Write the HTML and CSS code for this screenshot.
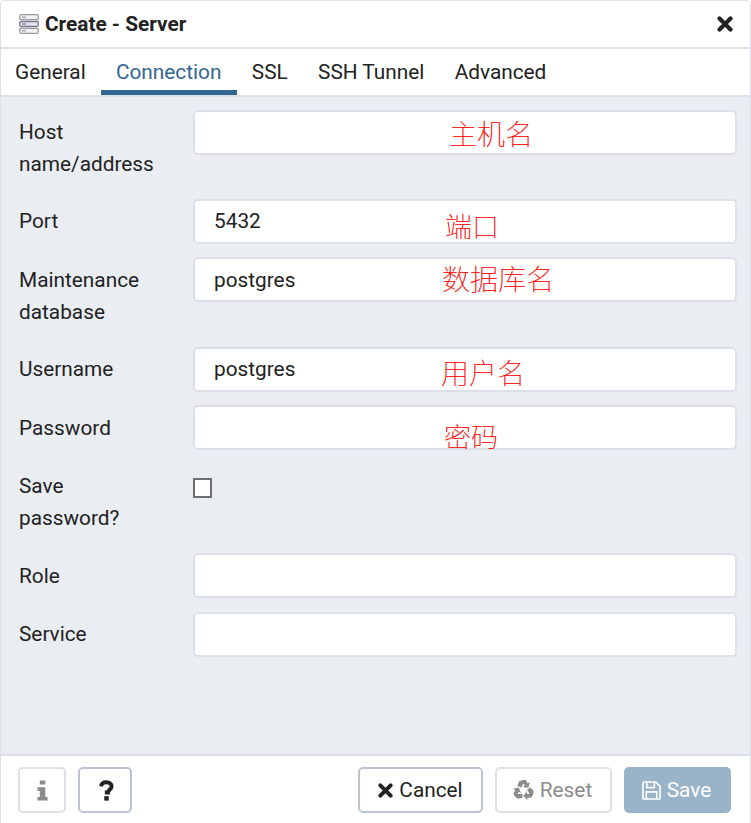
FILE: index.html
```html
<!DOCTYPE html>
<html lang="en">
<head>
    <meta charset="UTF-8">
    <meta name="viewport" content="width=device-width, initial-scale=1.0">
    <title>Create - Server</title>
    <link rel="stylesheet" href="styles.css">
</head>
<body>
    <div class="dialog">
        <div class="dialog-header">
            <svg class="server-icon" viewBox="0 0 20 20" width="20" height="20">
                <rect x="0.7" y="0.7" width="18.6" height="5" rx="1.5" fill="#f2f2f2" stroke="#9a9a9a" stroke-width="1.3"/>
                <rect x="0.7" y="7.5" width="18.6" height="5" rx="1.5" fill="#e4e4f2" stroke="#77778f" stroke-width="1.3"/>
                <rect x="0.7" y="14.3" width="18.6" height="5" rx="1.5" fill="#f2f2f2" stroke="#9a9a9a" stroke-width="1.3"/>
                <rect x="3" y="2.6" width="4" height="1.2" fill="#999"/>
                <rect x="3" y="9.4" width="4" height="1.2" fill="#777"/>
                <rect x="3" y="16.2" width="4" height="1.2" fill="#999"/>
            </svg>
            <span class="dialog-title">Create - Server</span>
            <svg class="close-icon" viewBox="0 0 16 16" width="16" height="16">
                <path d="M2.5 2.5L13.5 13.5M13.5 2.5L2.5 13.5" stroke="#222" stroke-width="4.2" stroke-linecap="round"/>
            </svg>
        </div>

        <div class="tabs">
            <a class="tab">General</a>
            <a class="tab active">Connection</a>
            <a class="tab">SSL</a>
            <a class="tab">SSH Tunnel</a>
            <a class="tab">Advanced</a>
        </div>

        <form class="form-body">
            <div class="form-row">
                <label class="form-label">Host name/address</label>
                <input class="form-input" type="text">
            </div>
            <div class="form-row">
                <label class="form-label">Port</label>
                <input class="form-input" type="text" value="5432">
            </div>
            <div class="form-row">
                <label class="form-label">Maintenance database</label>
                <input class="form-input" type="text" value="postgres">
            </div>
            <div class="form-row">
                <label class="form-label">Username</label>
                <input class="form-input" type="text" value="postgres">
            </div>
            <div class="form-row">
                <label class="form-label">Password</label>
                <input class="form-input" type="password">
            </div>
            <div class="form-row">
                <label class="form-label">Save password?</label>
                <span class="checkbox"></span>
            </div>
            <div class="form-row">
                <label class="form-label">Role</label>
                <input class="form-input" type="text">
            </div>
            <div class="form-row">
                <label class="form-label">Service</label>
                <input class="form-input" type="text">
            </div>
        </form>

        <div class="dialog-footer">
            <button type="button" class="btn btn-info" disabled>
                <svg viewBox="0 0 12 22" width="11" height="21">
                    <path d="M3 0H9V4.5H3ZM0.5 7.5H9V18H11.5V22H0.5V18H3V11.5H0.5Z" fill="#8c8c8c"/>
                </svg>
            </button>
            <button type="button" class="btn btn-help">
                <svg viewBox="0 0 16 22" width="15" height="21">
                    <path d="M2.2 6.6C2.6 3.6 4.8 2.2 7.8 2.2C11 2.2 13.4 3.9 13.4 6.6C13.4 9.8 9.6 10 9.6 13.2H6.2" fill="none" stroke="#222" stroke-width="4.2"/>
                    <rect x="5.6" y="17" width="4.8" height="4.8" fill="#222"/>
                </svg>
            </button>
            <span class="footer-space"></span>
            <button type="button" class="btn btn-cancel">
                <svg viewBox="0 0 16 16" width="15" height="15">
                    <path d="M2.5 2.5L13.5 13.5M13.5 2.5L2.5 13.5" stroke="#222" stroke-width="4.2" stroke-linecap="round"/>
                </svg>
                Cancel
            </button>
            <button type="button" class="btn btn-reset" disabled>
                <svg class="reset-icon" viewBox="0 0 24 24" width="21" height="21">
                    <g fill="#8c8c8c">
                        <path id="arrow" d="M7 2.5L11 1H14.5L17 5L19.5 3.5L17.5 10L11 9L13.5 7.5L12 5L9 10L5 7.5Z"/>
                        <use href="#arrow" transform="rotate(120 12 13)"/>
                        <use href="#arrow" transform="rotate(240 12 13)"/>
                    </g>
                </svg>
                Reset
            </button>
            <button type="button" class="btn btn-save" disabled>
                <svg viewBox="0 0 20 20" width="19" height="19">
                    <path d="M1 2.5C1 1.7 1.7 1 2.5 1H14.5L19 5.5V17.5C19 18.3 18.3 19 17.5 19H2.5C1.7 19 1 18.3 1 17.5Z" fill="none" stroke="#fff" stroke-width="1.7"/>
                    <path d="M5 1.5V7H13V1.5M4.5 18.5V11.5H15.5V18.5" fill="none" stroke="#fff" stroke-width="1.7"/>
                </svg>
                Save
            </button>
        </div>

        <span class="note note-host">主机名</span>
        <span class="note note-port">端口</span>
        <span class="note note-db">数据库名</span>
        <span class="note note-user">用户名</span>
        <span class="note note-pass">密码</span>
    </div>
</body>
</html>
```

FILE: styles.css
```css
* {
    box-sizing: border-box;
}
body {
    margin: 0;
    font-family: Roboto, Arial, sans-serif;
    font-size: 20.8px;
    color: #222;
    background-color: #fff;
}
.dialog {
    position: relative;
    display: flex;
    flex-direction: column;
    width: 751px;
    height: 823px;
    border: 1px solid #dde0e8;
    border-bottom: none;
    border-radius: 5px 5px 0 0;
    overflow: hidden;
}
.dialog-header {
    display: flex;
    align-items: center;
    height: 48px;
    padding: 0 17px 0 18px;
    border-bottom: 2px solid #dde0e8;
    flex-shrink: 0;
}
.server-icon {
    margin-right: 6px;
}
.dialog-title {
    font-weight: 700;
    flex: 1;
}
.tabs {
    display: flex;
    height: 48px;
    border-bottom: 2px solid #dde0e8;
    flex-shrink: 0;
}
.tab {
    height: 46px;
    padding: 9px 15.2px 0;
    line-height: 28px;
    color: #222;
}
.tab:first-child {
    padding-left: 14px;
    padding-right: 15px;
}
.tab.active {
    color: #326690;
    border-bottom: 5px solid #326690;
}
.form-body {
    flex: 1;
    display: flex;
    flex-direction: column;
    gap: 13.6px;
    padding: 12.7px 13px 0 18px;
    background-color: #eaedf2;
}
.form-row {
    display: flex;
    align-items: flex-start;
}
.form-label {
    width: 174px;
    padding: 7.6px 30px 4.4px 0;
    line-height: 31.8px;
    flex-shrink: 0;
}
.form-input {
    flex: 1;
    height: 45px;
    padding: 0 19px;
    border: 2px solid #dde0e8;
    border-radius: 5px;
    background-color: #fff;
    font-family: inherit;
    font-size: 20.8px;
    color: #222;
}
.checkbox {
    width: 19px;
    height: 20px;
    margin-top: 14px;
    border: 2px solid #6e6e6e;
    background-color: #fff;
}
.dialog-footer {
    display: flex;
    gap: 12px;
    height: 69px;
    padding: 11px 19px 10px 17px;
    border-top: 2px solid #dde0e8;
    flex-shrink: 0;
}
.footer-space {
    flex: 1;
}
.btn {
    display: flex;
    align-items: center;
    justify-content: center;
    gap: 6px;
    height: 46px;
    padding: 0;
    border: 2px solid #bcc3d2;
    border-radius: 5px;
    background-color: #fff;
    font-family: inherit;
    font-size: 20.8px;
    color: #222;
}
.btn-info {
    width: 48px;
    border-color: #dde0e8;
}
.btn-help {
    width: 54px;
    padding-left: 3px;
}
.btn-cancel {
    width: 125px;
}
.btn-reset {
    width: 117px;
    padding-right: 2px;
    border-color: #dde0e8;
    color: #8c8c8c;
}
.reset-icon {
    margin-bottom: 2px;
}
.btn-save {
    width: 107px;
    padding-right: 2px;
    border-color: #99b3c8;
    background-color: #99b3c8;
    color: #fff;
}
.note {
    position: absolute;
    font-family: "Noto Sans CJK SC", sans-serif;
    font-weight: 100;
    font-size: 28px;
    line-height: 28px;
    color: #f00;
    -webkit-text-stroke: 0.2px #f00;
    white-space: nowrap;
}
.note-host {
    left: 448px;
    top: 117.5px;
}
.note-port {
    left: 444px;
    top: 211px;
    font-size: 27px;
}
.note-db {
    left: 441px;
    top: 263px;
}
.note-user {
    left: 440px;
    top: 357px;
}
.note-pass {
    left: 443px;
    top: 421px;
    font-size: 27px;
}
```
